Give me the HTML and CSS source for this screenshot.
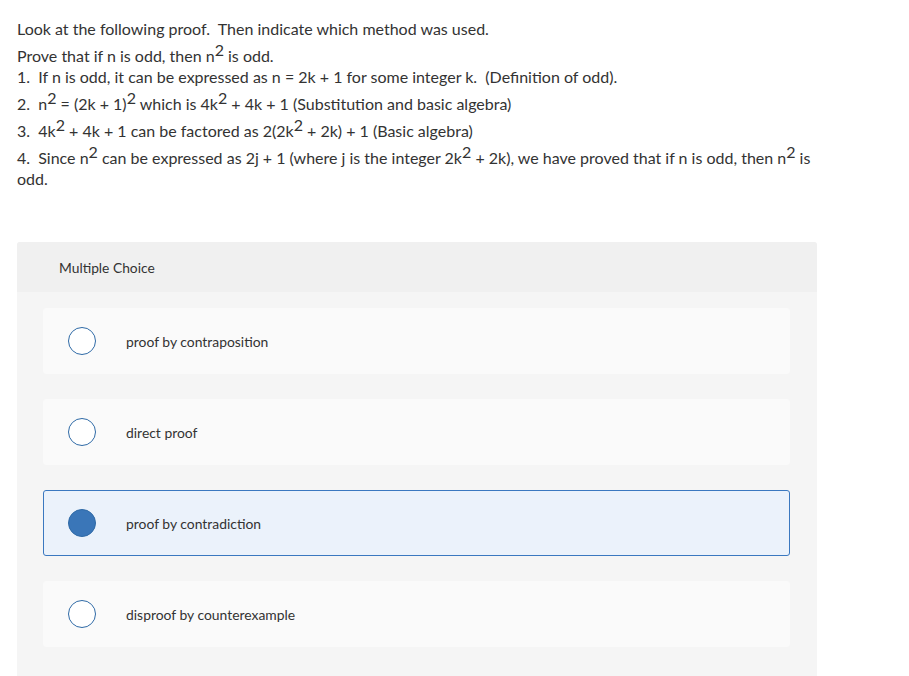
FILE: index.html
```html
<!DOCTYPE html>
<html>
<head>
<meta charset="utf-8">
<link rel="stylesheet" href="styles.css">
</head>
<body>
<div class="page">
  <div class="question">
    <div class="line">Look at the following proof.&nbsp; Then indicate which method was used.</div>
    <div class="line tall">Prove that if n is odd, then n<sup>2</sup> is odd.</div>
    <div class="line">1.&nbsp; If n is odd, it can be expressed as n = 2k + 1 for some integer k.&nbsp; (Definition of odd).</div>
    <div class="line tall">2.&nbsp; n<sup>2</sup> = (2k + 1)<sup>2</sup> which is 4k<sup>2</sup> + 4k + 1 (Substitution and basic algebra)</div>
    <div class="line tall">3.&nbsp; 4k<sup>2</sup> + 4k + 1 can be factored as 2(2k<sup>2</sup> + 2k) + 1 (Basic algebra)</div>
    <div class="line tall">4.&nbsp; Since n<sup>2</sup> can be expressed as 2j + 1 (where j is the integer 2k<sup>2</sup> + 2k), we have proved that if n is odd, then n<sup>2</sup> is odd.</div>
  </div>
  <div class="panel">
    <div class="panel-head">Multiple Choice</div>
    <div class="options">
      <div class="option"><span class="radio"></span><span class="label">proof by contraposition</span></div>
      <div class="option"><span class="radio"></span><span class="label">direct proof</span></div>
      <div class="option selected"><span class="radio"></span><span class="label">proof by contradiction</span></div>
      <div class="option"><span class="radio"></span><span class="label">disproof by counterexample</span></div>
    </div>
  </div>
</div>
</body>
</html>
```
FILE: styles.css
```css
html, body {
  margin: 0;
  padding: 0;
  background: #ffffff;
}
body {
  font-family: Lato, "Open Sans", sans-serif;
  color: #333333;
}
.page {
  padding: 18px 17px 0 17px;
  width: 800px;
}
.question {
  font-size: 16px;
  line-height: 21px;
}
.line.tall {
  padding-top: 6px;
}
.line sup {
  font-size: 100%;
  vertical-align: 6px;
  line-height: 0;
}
.panel {
  margin-top: 53px;
  background: #f5f5f5;
  border-radius: 3px 3px 0 0;
  padding-bottom: 30px;
}
.panel-head {
  background: #f0f0f0;
  height: 50px;
  box-sizing: border-box;
  padding-left: 42px;
  display: flex;
  align-items: center;
  font-size: 13.8px;
  color: #333;
  border-radius: 3px 3px 0 0;
}
.options {
  display: flex;
  flex-direction: column;
  gap: 25px;
  padding: 16px 27px 0 26px;
}
.option {
  height: 66px;
  box-sizing: border-box;
  background: #fafafa;
  border: 1px solid #fafafa;
  border-radius: 3px;
  display: flex;
  align-items: center;
  padding-left: 24px;
}
.radio {
  width: 28px;
  height: 28px;
  box-sizing: border-box;
  border: 1.5px solid #2f6aa6;
  border-radius: 50%;
  background: #ffffff;
  flex: none;
}
.label {
  margin-left: 30px;
  font-size: 13.9px;
  color: #333;
}
.option.selected {
  background: #ebf2fb;
  border-color: #3a78c0;
}
.option.selected .radio {
  background: #3a76b8;
  border-color: #2f6aa6;
}
```
